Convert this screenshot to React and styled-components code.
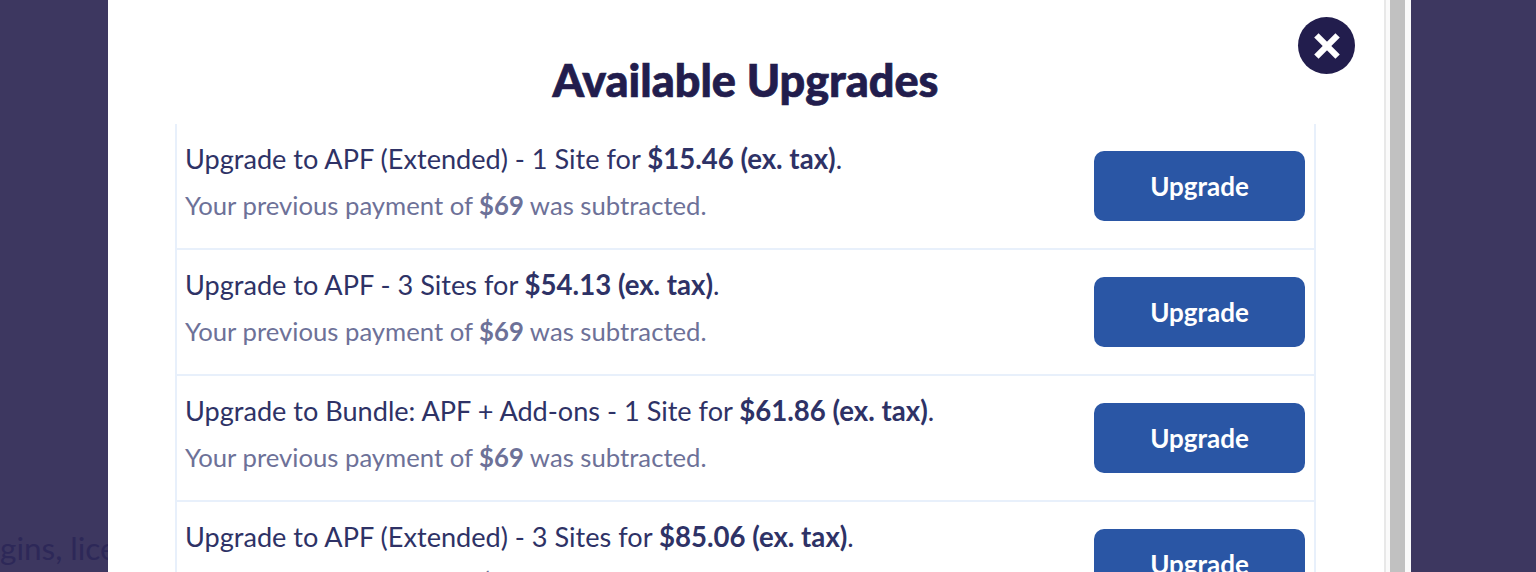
import React from 'react';
import styled, { createGlobalStyle } from 'styled-components';

const upgrades = [
  { name: 'APF (Extended) - 1 Site', price: '$15.46' },
  { name: 'APF - 3 Sites', price: '$54.13' },
  { name: 'Bundle: APF + Add-ons - 1 Site', price: '$61.86' },
  { name: 'APF (Extended) - 3 Sites', price: '$85.06' },
];

function App() {
  return (
    <Page>
      <GlobalStyle />
      <Gutter>
        <BehindText>gins, licenses</BehindText>
      </Gutter>
      <Modal>
        <ModalBody>
          <CloseButton aria-label="Close">
            <svg width="26" height="26" viewBox="0 0 26 26" fill="none" stroke="#fff" strokeWidth="6.2">
              <line x1="2.4" y1="2.4" x2="23.6" y2="23.6" />
              <line x1="23.6" y1="2.4" x2="2.4" y2="23.6" />
            </svg>
          </CloseButton>
          <Title>Available Upgrades</Title>
          <List>
            {upgrades.map((item) => (
              <Row key={item.name}>
                <RowText>
                  <Offer>
                    Upgrade to {item.name} for <strong>{item.price} (ex. tax)</strong>.
                  </Offer>
                  <Note>
                    Your previous payment of <strong>$69</strong> was subtracted.
                  </Note>
                </RowText>
                <UpgradeButton>Upgrade</UpgradeButton>
              </Row>
            ))}
          </List>
        </ModalBody>
        <Scrollbar>
          <ScrollThumb />
        </Scrollbar>
      </Modal>
      <Gutter $grow />
    </Page>
  );
}

const GlobalStyle = createGlobalStyle`
  html, body {
    margin: 0;
    padding: 0;
    background: #3d3760;
  }
`;

const Page = styled.div`
  display: flex;
  height: 572px;
  overflow: hidden;
  background: #3d3760;
  font-family: "Lato", "Open Sans", sans-serif;
`;

const Gutter = styled.div`
  width: 108px;
  flex: ${({ $grow }) => ($grow ? '1' : 'none')};
  display: flex;
  align-items: flex-end;
  overflow: hidden;
`;

const BehindText = styled.span`
  white-space: nowrap;
  font-size: 31.5px;
  line-height: 48px;
  color: #2d2858;
`;

const Modal = styled.div`
  width: 1303px;
  flex: none;
  display: flex;
  background: #fff;
  overflow: hidden;
`;

const ModalBody = styled.div`
  position: relative;
  flex: 1;
  padding: 0 68px 0 67px;
  text-align: center;
`;

const CloseButton = styled.button`
  position: absolute;
  top: 17px;
  right: 29px;
  width: 57px;
  height: 57px;
  padding: 0;
  border: none;
  border-radius: 50%;
  background: #221d4d;
  display: flex;
  align-items: center;
  justify-content: center;
`;

const Title = styled.h2`
  margin: 0;
  height: 124px;
  padding-top: 54px;
  box-sizing: border-box;
  font-family: "Lato", sans-serif;
  font-weight: 900;
  font-size: 45px;
  line-height: 52px;
  color: #221d4d;
  -webkit-text-stroke: 0.7px #221d4d;
`;

const List = styled.div`
  border-left: 2px solid #e8f0fb;
  border-right: 2px solid #e8f0fb;
  text-align: left;
`;

const Row = styled.div`
  height: 126px;
  box-sizing: border-box;
  padding: 0 9px 0 8px;
  display: flex;
  align-items: flex-start;
  justify-content: space-between;
  border-bottom: 2px solid #e8f0fb;
`;

const RowText = styled.div`
  padding-top: 15px;
`;

const Offer = styled.div`
  font-size: 27.1px;
  line-height: 40px;
  color: #2e3266;

  strong {
    font-size: 27.6px;
  }
`;

const Note = styled.div`
  margin-top: 6px;
  font-size: 25.7px;
  line-height: 40px;
  color: #6d7198;
`;

const UpgradeButton = styled.button`
  width: 211px;
  height: 70px;
  margin-top: 27px;
  border: none;
  border-radius: 10px;
  background: #2a56a5;
  color: #fff;
  font-family: inherit;
  font-weight: 700;
  font-size: 26px;
  line-height: 1;
  padding: 0;
`;

const Scrollbar = styled.div`
  width: 27px;
  flex: none;
  box-sizing: border-box;
  padding: 0 6px 0 4px;
  background: #fafafa;
  border-left: 2px solid #e8e8e8;
`;

const ScrollThumb = styled.div`
  height: 100%;
  background: #c1c1c1;
`;

export default App;
